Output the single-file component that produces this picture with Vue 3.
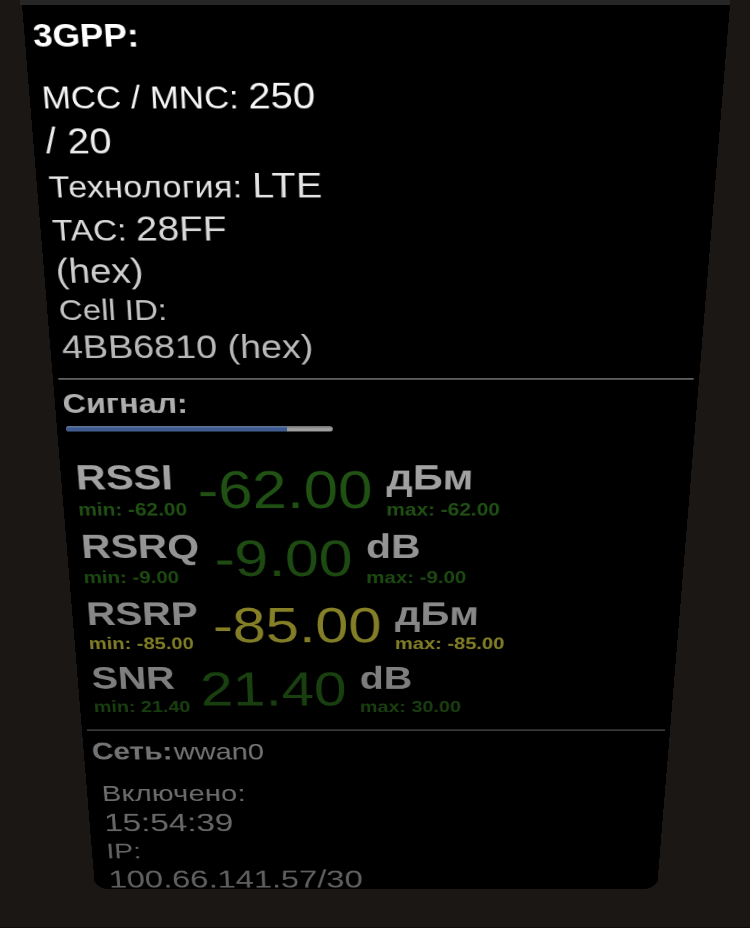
<template>
  <div class="page">
    <div class="strip"></div>
    <div class="panel">
      <h2 class="title">3GPP:</h2>
      <div class="info">
        <div class="line">MCC / MNC: <span class="value">250</span></div>
        <div class="line"><span class="value">/ 20</span></div>
        <div class="line tech">Технология: <span class="value">LTE</span></div>
        <div class="line">TAC: <span class="value">28FF</span></div>
        <div class="line"><span class="value">(hex)</span></div>
        <div class="line label">Cell ID:</div>
        <div class="line wide"><span class="value">4BB6810 (hex)</span></div>
      </div>
      <div class="divider"></div>

      <h2 class="title signal">Сигнал:</h2>
      <div class="bar">
        <div class="bar-fill" :style="{ width: quality + '%' }"></div>
      </div>
      <div class="stats">
        <div v-for="s in stats" :key="s.name" :class="['stat', s.level]">
          <div class="cell">
            <div class="name">{{ s.name }}</div>
            <div class="limit">min: {{ s.min }}</div>
          </div>
          <div class="number">{{ s.value }}</div>
          <div class="cell">
            <div class="name">{{ s.unit }}</div>
            <div class="limit">max: {{ s.max }}</div>
          </div>
        </div>
      </div>
      <div class="divider"></div>

      <div class="network"><b>Сеть:</b><span class="iface">wwan0</span></div>
      <div class="info net-info">
        <div class="line uptime">Включено:</div>
        <div class="line wide"><span class="value">15:54:39</span></div>
        <div class="line ip">IP:</div>
        <div class="line address"><span class="value">100.66.141.57/30</span></div>
      </div>
    </div>
  </div>
</template>

<script setup>
const quality = 83

const stats = [
  { name: 'RSSI', value: '-62.00', unit: 'дБм', min: '-62.00', max: '-62.00', level: 'good' },
  { name: 'RSRQ', value: '-9.00', unit: 'dB', min: '-9.00', max: '-9.00', level: 'good' },
  { name: 'RSRP', value: '-85.00', unit: 'дБм', min: '-85.00', max: '-85.00', level: 'fair' },
  { name: 'SNR', value: '21.40', unit: 'dB', min: '21.40', max: '30.00', level: 'good' }
]
</script>

<style>
body {
  margin: 0;
  background: #1b1714;
}
</style>

<style scoped>
.page {
  box-sizing: border-box;
  height: 928px;
  overflow: hidden;
  background: #1b1714;
  border-bottom: 1px solid #120c0c;
  font-family: "Liberation Sans", Arial, sans-serif;
  color: #fff;
}

.strip {
  height: 5px;
  width: 710px;
  margin-left: 20px;
  background: #262626;
}

/* Panel tilted away from the viewer */
.panel {
  position: relative;
  box-sizing: border-box;
  width: 708px;
  height: 1166px;
  margin-left: 22px;
  padding-top: 10.5px;
  overflow: hidden;
  background: #000;
  border-radius: 0 0 16px 16px;
  font-size: 36px;
  transform-origin: 50% 0;
  transform: matrix3d(1, 0, 0, 0, 0, 0.955, 0, 0.000223, 0, 0, 1, 0, 0, 0, 0, 1);
}

/* Fade towards the far edge */
.panel::after {
  content: "";
  position: absolute;
  inset: 0;
  background: linear-gradient(
    rgba(0, 0, 0, 0) 40px,
    rgba(0, 0, 0, 0.11) 200px,
    rgba(0, 0, 0, 0.28) 390px,
    rgba(0, 0, 0, 0.37) 557px,
    rgba(0, 0, 0, 0.47) 743px,
    rgba(0, 0, 0, 0.55) 945px,
    rgba(0, 0, 0, 0.63) 1153px
  );
}

.title {
  margin: 0 0 0 8.5px;
  font-size: 35.5px;
  font-weight: 700;
  line-height: 42px;
}

.info {
  padding: 21px 0 10px 12.5px;
}

.line {
  font-size: 35.5px;
  line-height: 50px;
  white-space: nowrap;
}

.line.tech {
  letter-spacing: 0.4px;
}

.value {
  font-size: 41px;
  line-height: 1;
}

.line.label {
  line-height: 40px;
}

.line.wide {
  line-height: 54px;
}

.divider {
  height: 2px;
  margin: 0 6px;
  background: #8b8d8d;
}

.signal {
  margin-top: 9.5px;
}

.bar {
  width: 296px;
  height: 7px;
  margin: 8px 0 0 9.5px;
  overflow: hidden;
  border-radius: 4px;
  background: linear-gradient(#aaa, #f8f8f8 60%, #ddd);
}

.bar-fill {
  height: 100%;
  background: linear-gradient(#9db4e2, #5584d8 45%, #6a92da);
}

.stats {
  padding: 36px 0 7.5px 16.5px;
}

.stat {
  display: flex;
  height: 93.4px;
}

.name {
  padding-right: 4px;
  font-size: 46.7px;
  font-weight: 700;
  line-height: 48px;
}

.limit {
  font-size: 23.6px;
  font-weight: 700;
  line-height: 39px;
}

.number {
  margin: 0 16px 0 13px;
  font-size: 69.5px;
  line-height: 82px;
}

.good .number,
.good .limit {
  color: #33821f;
}

.fair .number,
.fair .limit {
  color: #fbf24a;
}

.network {
  margin: 11px 0 0 10px;
  line-height: 42px;
}

.iface {
  margin-left: 2px;
  font-size: 35px;
}

.net-info {
  padding: 23px 0 0 18px;
}

.line.uptime {
  letter-spacing: 0.3px;
  line-height: 42px;
}

.line.ip {
  line-height: 34px;
}

.line.address {
  padding-top: 7px;
  line-height: 48px;
}
</style>
